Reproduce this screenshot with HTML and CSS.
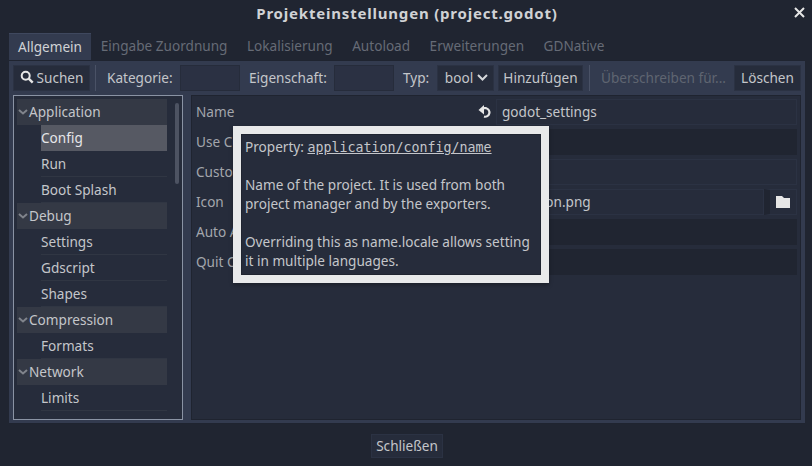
FILE: index.html
```html
<!DOCTYPE html>
<html lang="de">
<head>
    <meta charset="UTF-8">
    <title>Projekteinstellungen (project.godot)</title>
    <link rel="stylesheet" href="styles.css">
</head>
<body>

<div class="dialog">
    <!-- Titel -->
    <div class="titlebar">
        <h1>Projekteinstellungen (project.godot)</h1>
        <svg class="close" width="11" height="11" viewBox="0 0 11 11"><path d="M1 1l9 9M10 1l-9 9" stroke="#e6e6e6" stroke-width="2" fill="none"/></svg>
    </div>

    <!-- Tabs -->
    <div class="tabs">
        <span class="tab active">Allgemein</span>
        <span class="tab">Eingabe Zuordnung</span>
        <span class="tab">Lokalisierung</span>
        <span class="tab">Autoload</span>
        <span class="tab">Erweiterungen</span>
        <span class="tab">GDNative</span>
    </div>

    <div class="panel">
        <!-- Toolbar -->
        <div class="toolbar">
            <button class="btn search-btn">
                <svg width="14" height="14" viewBox="0 0 14 14"><circle cx="5.7" cy="5.7" r="4" stroke="#e6e6e6" stroke-width="2" fill="none"/><path d="M8.7 8.7l4 4" stroke="#e6e6e6" stroke-width="2.4" fill="none"/></svg>
                Suchen
            </button>
            <span class="sep"></span>
            <label class="lbl lbl-kategorie">Kategorie:</label>
            <span class="input"></span>
            <label class="lbl lbl-eigenschaft">Eigenschaft:</label>
            <span class="input"></span>
            <label class="lbl lbl-typ">Typ:</label>
            <button class="btn bool-btn">
                bool
                <svg width="11" height="7" viewBox="0 0 11 7"><path d="M1 1l4.5 4.5L10 1" stroke="#d5d7da" stroke-width="2" fill="none"/></svg>
            </button>
            <button class="btn add-btn">Hinzufügen</button>
            <span class="sep sep-right"></span>
            <span class="disabled">Überschreiben für...</span>
            <button class="btn delete-btn">Löschen</button>
        </div>

        <div class="content">
            <!-- Baum -->
            <div class="tree">
                <div class="scrollbar"></div>
                <div class="row head"><svg width="10" height="6" viewBox="0 0 10 6"><path d="M1 1l4 3.5L9 1" stroke="#80848c" stroke-width="2" fill="none"/></svg>Application</div>
                <div class="row sub selected">Config</div>
                <div class="row sub">Run</div>
                <div class="row sub">Boot Splash</div>
                <div class="row head"><svg width="10" height="6" viewBox="0 0 10 6"><path d="M1 1l4 3.5L9 1" stroke="#80848c" stroke-width="2" fill="none"/></svg>Debug</div>
                <div class="row sub">Settings</div>
                <div class="row sub">Gdscript</div>
                <div class="row sub">Shapes</div>
                <div class="row head"><svg width="10" height="6" viewBox="0 0 10 6"><path d="M1 1l4 3.5L9 1" stroke="#80848c" stroke-width="2" fill="none"/></svg>Compression</div>
                <div class="row sub">Formats</div>
                <div class="row head"><svg width="10" height="6" viewBox="0 0 10 6"><path d="M1 1l4 3.5L9 1" stroke="#80848c" stroke-width="2" fill="none"/></svg>Network</div>
                <div class="row sub">Limits</div>
                <div class="row sub">Remote Fs</div>
            </div>

            <!-- Eigenschaften -->
            <div class="inspector">
                <div class="prop">
                    <span class="prop-name">Name</span>
                    <svg class="revert" width="15" height="14" viewBox="0 0 15 14"><path d="M5 3.2H8.2A4.3 4.3 0 1 1 6 11.6" stroke="#e6e6e6" stroke-width="2.2" fill="none"/><path d="M0.5 5L6 0V9.5z" fill="#e6e6e6"/></svg>
                    <span class="field">godot_settings</span>
                </div>
                <div class="prop">
                    <span class="prop-name">Use Custom User Dir</span>
                    <span class="field dark"></span>
                </div>
                <div class="prop">
                    <span class="prop-name">Custom User Dir Name</span>
                    <span class="field"></span>
                </div>
                <div class="prop">
                    <span class="prop-name">Icon</span>
                    <span class="field short">res://icon.png</span>
                    <span class="folder-btn">
                        <svg width="14" height="12" viewBox="0 0 14 12"><path d="M0 0h6l2 2h6v10H0z" fill="#e6e6e6"/></svg>
                    </span>
                </div>
                <div class="prop">
                    <span class="prop-name">Auto Accept Quit</span>
                    <span class="field dark"></span>
                </div>
                <div class="prop">
                    <span class="prop-name">Quit On Go Back</span>
                    <span class="field dark"></span>
                </div>
            </div>
        </div>
    </div>

    <div class="footer">
        <button class="btn close-btn">Schließen</button>
    </div>
</div>

<!-- Tooltip -->
<div class="tooltip">
    <div class="tooltip-inner">
        <p>Property: <a class="code">application/config/name</a></p>
        <p>Name of the project. It is used from both<br>project manager and by the exporters.</p>
        <p>Overriding this as name.locale allows setting<br>it in multiple languages.</p>
    </div>
</div>

</body>
</html>
```

FILE: styles.css
```css
* {
    box-sizing: border-box;
}
body {
    font-family: 'Noto Sans', sans-serif;
    font-size: 13.6px;
    color: #c4c6ca;
    margin: 0;
    width: 812px;
    height: 466px;
    background: #202531;
    overflow: hidden;
    position: relative;
}
.dialog {
    padding: 0 7px 0 9px;
}
.titlebar {
    height: 33px;
    position: relative;
    text-align: center;
}
.titlebar h1 {
    margin: 0;
    padding: 3px 0 0;
    font-size: 15px;
    line-height: 20px;
    font-weight: 700;
    letter-spacing: 0.8px;
    color: #d0d2d5;
}
.close {
    position: absolute;
    right: 0;
    top: 7px;
}
.tabs {
    display: flex;
    height: 27px;
    line-height: 26px;
}
.tab {
    padding: 0 9.75px;
    color: #666b76;
}
.tab.active {
    padding: 0 9px 0 9px;
    color: #d0d2d5;
    background: #333b4f;
    border-top: 1px solid #3f485e;
}
.panel {
    background: #333b4f;
    height: 364px;
    padding: 4px 4px 4px;
    border-top: 1px solid #1f2430;
    border-bottom: 1px solid #1f2430;
}
.toolbar {
    display: flex;
    align-items: center;
    height: 26px;
}
.btn {
    font: inherit;
    color: #c4c6ca;
    background: #262c3b;
    border: 1px solid #2b3243;
    height: 26px;
    padding: 0 0 2px;
    display: flex;
    align-items: center;
    justify-content: center;
}
.search-btn {
    width: 77px;
    gap: 3px;
}
.sep {
    width: 1px;
    height: 26px;
    background: #4a5266;
    margin: 0 11px 0 5px;
}
.sep-right {
    margin: 0 11px 0 6px;
}
.lbl {
    margin-top: -2px;
}
.lbl-kategorie {
    width: 73px;
}
.lbl-eigenschaft {
    width: 85px;
    margin-left: 9px;
}
.lbl-typ {
    width: 34px;
    margin-left: 9px;
}
.input {
    width: 60px;
    height: 26px;
    background: #2b3143;
    border: 1px solid #262c3b;
}
.bool-btn {
    width: 57px;
    gap: 4px;
    padding-left: 2px;
}
.add-btn {
    width: 85px;
    margin-left: 4px;
}
.disabled {
    color: #5f6571;
    width: 133px;
    margin-top: -2px;
    white-space: nowrap;
}
.delete-btn {
    width: 67px;
}
.content {
    display: flex;
    gap: 8px;
    margin-top: 4px;
}
.tree {
    width: 170px;
    height: 325px;
    background: #262c3b;
    border: 1px solid #8a93a4;
    padding: 3px 15px 0 3px;
    overflow: hidden;
    position: relative;
}
.scrollbar {
    position: absolute;
    left: 161px;
    top: 7px;
    width: 4px;
    height: 81px;
    background: #4d5362;
    border-radius: 2px;
}
.row {
    height: 26px;
    line-height: 26px;
    white-space: nowrap;
}
.head {
    background: #343945;
    padding-left: 12px;
    position: relative;
}
.head svg {
    position: absolute;
    left: 1px;
    top: 10px;
}
.sub {
    margin-left: 24px;
    border-bottom: 1px solid #303643;
}
.sub.selected {
    background: #565963;
    color: #e6e7e9;
    border-bottom: none;
}
.inspector {
    width: 610px;
    height: 325px;
    background: #262c3b;
    border: 1px solid #1f2430;
    padding: 3px 0 0 4px;
    display: flex;
    flex-direction: column;
    gap: 4px;
}
.prop {
    display: flex;
    align-items: center;
    height: 26px;
    position: relative;
}
.prop-name {
    width: 300px;
    color: #a3a6ac;
    white-space: nowrap;
    margin-top: -2px;
}
.revert {
    position: absolute;
    left: 282px;
    top: 6px;
}
.field {
    width: 301px;
    height: 26px;
    line-height: 24px;
    padding-left: 5px;
    background: #262c3b;
    border: 1px solid #2b3243;
}
.field.dark {
    background: #202531;
    border-color: #202531;
}
.field.short {
    width: 268px;
}
.folder-btn {
    width: 33px;
    height: 26px;
    background: #262c3b;
    border: 1px solid #2b3243;
    border-left: 6px solid #202531;
    display: flex;
    align-items: center;
    justify-content: center;
}
.footer {
    display: flex;
    justify-content: center;
    padding: 10px 0 0;
}
.close-btn {
    width: 72px;
    height: 24px;
}
.tooltip {
    position: absolute;
    left: 233px;
    top: 126px;
    width: 316px;
    height: 157px;
    background: #e8e9ea;
    padding: 8px;
    box-shadow: 0 2px 4px rgba(0, 0, 0, 0.3);
}
.tooltip-inner {
    height: 141px;
    background: #262c3b;
    border: 1px solid #1f2430;
    padding: 2px 3px;
    line-height: 19px;
    white-space: nowrap;
}
.tooltip-inner p {
    margin: 0 0 19px;
}
.code {
    font-family: 'DejaVu Sans Mono', monospace;
    font-size: 13.3px;
    line-height: 1;
    text-decoration: underline;
}
```
